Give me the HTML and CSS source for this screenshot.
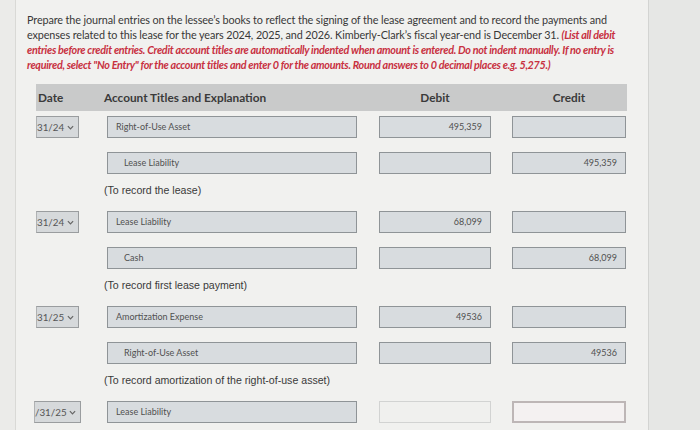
FILE: index.html
```html
<!DOCTYPE html>
<html>
<head>
<meta charset="utf-8">
<link rel="stylesheet" href="styles.css">
</head>
<body>
<div class="screen">
  <div class="gutter"></div>
  <main class="panel">
    <p class="prompt">Prepare the journal entries on the lessee’s books to reflect the signing of the lease agreement and to record the payments and expenses related to this lease for the years 2024, 2025, and 2026. Kimberly-Clark’s fiscal year-end is December 31. <em class="note">(List all debit entries before credit entries. Credit account titles are automatically indented when amount is entered. Do not indent manually. If no entry is required, select "No Entry" for the account titles and enter 0 for the amounts. Round answers to 0 decimal places e.g. 5,275.)</em></p>

    <div class="journal">
      <div class="head">
        <span class="h-date">Date</span>
        <span class="h-acct">Account Titles and Explanation</span>
        <span class="h-debit">Debit</span>
        <span class="h-credit">Credit</span>
      </div>

      <div class="entry">
        <div class="line">
          <div class="date-sel"><span>31/24</span><svg class="chev" viewBox="0 0 8 5" width="7" height="5"><path d="M1 1l3 3 3-3" fill="none" stroke="#666" stroke-width="1.4"/></svg></div>
          <div class="acct">Right-of-Use Asset</div>
          <div class="amt debit">495,359</div>
          <div class="amt credit"></div>
        </div>
        <div class="line">
          <div class="date-blank"></div>
          <div class="acct indent">Lease Liability</div>
          <div class="amt debit"></div>
          <div class="amt credit">495,359</div>
        </div>
        <div class="expl">(To record the lease)</div>
      </div>

      <div class="entry">
        <div class="line">
          <div class="date-sel"><span>31/24</span><svg class="chev" viewBox="0 0 8 5" width="7" height="5"><path d="M1 1l3 3 3-3" fill="none" stroke="#666" stroke-width="1.4"/></svg></div>
          <div class="acct">Lease Liability</div>
          <div class="amt debit">68,099</div>
          <div class="amt credit"></div>
        </div>
        <div class="line">
          <div class="date-blank"></div>
          <div class="acct indent">Cash</div>
          <div class="amt debit"></div>
          <div class="amt credit">68,099</div>
        </div>
        <div class="expl">(To record first lease payment)</div>
      </div>

      <div class="entry">
        <div class="line">
          <div class="date-sel"><span>31/25</span><svg class="chev" viewBox="0 0 8 5" width="7" height="5"><path d="M1 1l3 3 3-3" fill="none" stroke="#666" stroke-width="1.4"/></svg></div>
          <div class="acct">Amortization Expense</div>
          <div class="amt debit">49536</div>
          <div class="amt credit"></div>
        </div>
        <div class="line">
          <div class="date-blank"></div>
          <div class="acct indent">Right-of-Use Asset</div>
          <div class="amt debit"></div>
          <div class="amt credit">49536</div>
        </div>
        <div class="expl">(To record amortization of the right-of-use asset)</div>
      </div>

      <div class="entry">
        <div class="line">
          <div class="date-sel wide"><span>/31/25</span><svg class="chev" viewBox="0 0 8 5" width="7" height="5"><path d="M1 1l3 3 3-3" fill="none" stroke="#666" stroke-width="1.4"/></svg></div>
          <div class="acct">Lease Liability</div>
          <div class="amt debit empty"></div>
          <div class="amt credit focus"></div>
        </div>
      </div>
    </div>
  </main>
  <div class="side"></div>
</div>
</body>
</html>
```

FILE: styles.css
```css
html, body {
  margin: 0;
  padding: 0;
  background: #e9e9e7;
}
.screen {
  display: flex;
  width: 700px;
  height: 430px;
  overflow: hidden;
}
.gutter {
  width: 16px;
  flex: none;
  background: #ebebe9;
  border-right: 1px solid #d9d9d6;
  box-sizing: border-box;
}
.panel {
  width: 632px;
  flex: none;
  background: #f1f1ef;
  padding: 12px 0 0 11px;
  box-sizing: border-box;
  font-family: Lato, "Liberation Sans", sans-serif;
  color: #383838;
}
.side {
  flex: 1;
  background: #e6e7e5;
  border-left: 1px solid #d3d4d2;
}
.prompt {
  margin: 0;
  width: 612px;
  font-size: 10.8px;
  line-height: 15px;
  letter-spacing: -0.1px;
}
.note {
  color: #c8303f;
  font-weight: 700;
  font-style: italic;
  letter-spacing: -0.3px;
}
.journal {
  margin: 12px 0 0 9px;
  width: 591px;
}
.head {
  display: flex;
  align-items: center;
  height: 27px;
  background: #c9caca;
  font-weight: 700;
  font-size: 11.8px;
  color: #3a3a3a;
}
.h-date { width: 66px; padding-left: 2px; }
.h-acct { width: 275px; }
.h-debit { width: 112px; margin-right: 21px; text-align: center; }
.h-credit { width: 114px; text-align: center; }

.entry {
  padding-top: 5px;
  height: 90px;
}
.line {
  display: flex;
  align-items: flex-start;
  height: 22px;
  margin-bottom: 14px;
}
.line + .line { margin-bottom: 0; }
.date-sel, .date-blank {
  width: 43px;
  height: 22px;
  box-sizing: border-box;
  flex: none;
}
.date-sel {
  display: flex;
  align-items: center;
  justify-content: space-between;
  background: #d6d9db;
  border: 1px solid #9a9d9f;
  border-left-color: #b0b2b3;
  padding: 0 4px 0 0;
  font-size: 9.8px;
  color: #555;
  overflow: hidden;
}
.date-sel.wide {
  width: 47px;
  margin-left: -2px;
  margin-right: -2px;
}
.chev { flex: none; }
.acct {
  margin-left: 28px;
  width: 250px;
  height: 22px;
  box-sizing: border-box;
  background: #d8dcdf;
  border: 1px solid #8f9497;
  padding: 0 8px;
  font-size: 9px;
  line-height: 20px;
  color: #505050;
  flex: none;
}
.acct.indent { padding-left: 16px; }
.amt {
  width: 112px;
  height: 22px;
  box-sizing: border-box;
  background: #d8dcdf;
  border: 1px solid #8f9497;
  padding: 0 8px;
  font-size: 9px;
  line-height: 20px;
  text-align: right;
  color: #505050;
  flex: none;
}
.debit { margin-left: 22px; }
.credit { margin-left: 21px; width: 114px; }
.amt.empty {
  background: #f0f0ee;
  border-color: #d2d3d2;
}
.amt.focus {
  background: #f4f1f1;
  border: 2px solid #bdb6b6;
}
.expl {
  margin-top: 8px;
  margin-left: 68px;
  font-family: "Liberation Sans", Arial, sans-serif;
  font-size: 10.6px;
  line-height: 16px;
  color: #3a3a3a;
}
```
